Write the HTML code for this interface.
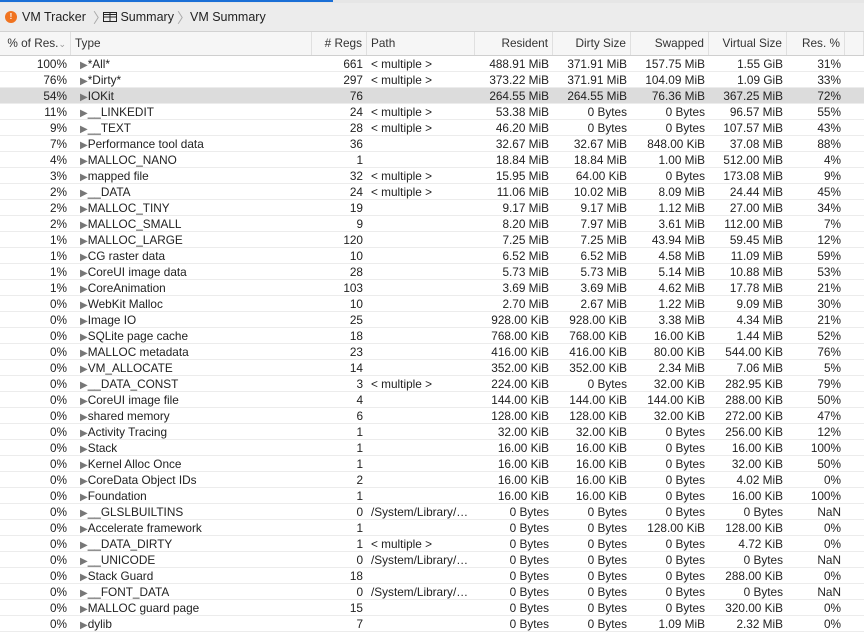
<!DOCTYPE html>
<html><head><meta charset="utf-8"><style>
*{margin:0;padding:0;box-sizing:border-box}
body{width:864px;height:640px;background:#fff;font-family:"Liberation Sans",Arial,sans-serif;font-size:11.8px;color:#222;position:relative;overflow:hidden}
.top{position:absolute;left:0;top:0;width:864px;height:3px;background:#e6e6e6}
.top i{position:absolute;left:0;top:0;width:333px;height:2px;background:#1a6fd6}
.crumb{position:absolute;left:0;top:3px;width:864px;height:29px;background:#ececec;border-bottom:1px solid #d2d2d2;font-size:12.5px;color:#222}
.crumb span{position:absolute;top:7px}
.dot{position:absolute;left:5px;top:8px;width:12px;height:12px;border-radius:50%;background:#f0731f;color:#fff;font-size:8px;line-height:12px;text-align:center;font-weight:bold}
.sep{color:#aaa;font-size:14px;top:5px!important}
#t{position:absolute;left:0;top:32px;width:864px}
.h{display:flex;height:24px;line-height:23px;background:#f6f6f6;border-bottom:1px solid #cfcfcf;color:#333}
.h>div{border-right:1px solid #e0e0e0}
.row{display:flex;height:16px;line-height:16px;border-bottom:1px solid #ececec}
.row>div,.h>div{padding:0 4px;white-space:nowrap;overflow:hidden;flex:none}
.row>div:nth-child(1),.h>div:nth-child(1){width:71px}
.row>div:nth-child(2),.h>div:nth-child(2){width:241px}
.row>div:nth-child(3),.h>div:nth-child(3){width:55px}
.row>div:nth-child(4),.h>div:nth-child(4){width:108px}
.row>div:nth-child(5),.h>div:nth-child(5),.row>div:nth-child(6),.h>div:nth-child(6),.row>div:nth-child(7),.h>div:nth-child(7),.row>div:nth-child(8),.h>div:nth-child(8){width:78px}
.row>div:nth-child(9),.h>div:nth-child(9){width:58px}
.row>div:nth-child(10),.h>div:nth-child(10){width:19px}
.r{text-align:right}
.row>.t{padding-left:9px}
.tri{color:#777;font-size:10px;line-height:1;display:inline-block}
.row.sel{background:#dcdcdc}
</style></head><body>
<div class="top"><i></i></div>
<div class="crumb"><div class="dot">!</div><span style="left:22px">VM Tracker</span><span class="sep" style="left:93px">〉</span>
<span style="left:103px"><svg width="14" height="10" viewBox="0 0 14 10" style="vertical-align:-1px"><rect x="0.5" y="0.5" width="13" height="9" fill="none" stroke="#222"/><line x1="0" y1="5" x2="14" y2="5" stroke="#222"/><line x1="7" y1="0" x2="7" y2="10" stroke="#222"/><line x1="0" y1="2.5" x2="14" y2="2.5" stroke="#222"/></svg> Summary</span><span class="sep" style="left:177px">〉</span><span style="left:190px">VM Summary</span></div>
<div id="t">
<div class="h"><div class="r">% of Res.<span style="color:#999;font-size:9px">⌄</span></div><div>Type</div><div class="r"># Regs</div><div>Path</div><div class="r">Resident</div><div class="r">Dirty Size</div><div class="r">Swapped</div><div class="r">Virtual Size</div><div class="r">Res. %</div><div></div></div>
<div class="row"><div class="r">100%</div><div class="t"><span class="tri">▶</span>*All*</div><div class="r">661</div><div>&lt; multiple &gt;</div><div class="r">488.91 MiB</div><div class="r">371.91 MiB</div><div class="r">157.75 MiB</div><div class="r">1.55 GiB</div><div class="r">31%</div><div></div></div>
<div class="row"><div class="r">76%</div><div class="t"><span class="tri">▶</span>*Dirty*</div><div class="r">297</div><div>&lt; multiple &gt;</div><div class="r">373.22 MiB</div><div class="r">371.91 MiB</div><div class="r">104.09 MiB</div><div class="r">1.09 GiB</div><div class="r">33%</div><div></div></div>
<div class="row sel"><div class="r">54%</div><div class="t"><span class="tri">▶</span>IOKit</div><div class="r">76</div><div></div><div class="r">264.55 MiB</div><div class="r">264.55 MiB</div><div class="r">76.36 MiB</div><div class="r">367.25 MiB</div><div class="r">72%</div><div></div></div>
<div class="row"><div class="r">11%</div><div class="t"><span class="tri">▶</span>__LINKEDIT</div><div class="r">24</div><div>&lt; multiple &gt;</div><div class="r">53.38 MiB</div><div class="r">0 Bytes</div><div class="r">0 Bytes</div><div class="r">96.57 MiB</div><div class="r">55%</div><div></div></div>
<div class="row"><div class="r">9%</div><div class="t"><span class="tri">▶</span>__TEXT</div><div class="r">28</div><div>&lt; multiple &gt;</div><div class="r">46.20 MiB</div><div class="r">0 Bytes</div><div class="r">0 Bytes</div><div class="r">107.57 MiB</div><div class="r">43%</div><div></div></div>
<div class="row"><div class="r">7%</div><div class="t"><span class="tri">▶</span>Performance tool data</div><div class="r">36</div><div></div><div class="r">32.67 MiB</div><div class="r">32.67 MiB</div><div class="r">848.00 KiB</div><div class="r">37.08 MiB</div><div class="r">88%</div><div></div></div>
<div class="row"><div class="r">4%</div><div class="t"><span class="tri">▶</span>MALLOC_NANO</div><div class="r">1</div><div></div><div class="r">18.84 MiB</div><div class="r">18.84 MiB</div><div class="r">1.00 MiB</div><div class="r">512.00 MiB</div><div class="r">4%</div><div></div></div>
<div class="row"><div class="r">3%</div><div class="t"><span class="tri">▶</span>mapped file</div><div class="r">32</div><div>&lt; multiple &gt;</div><div class="r">15.95 MiB</div><div class="r">64.00 KiB</div><div class="r">0 Bytes</div><div class="r">173.08 MiB</div><div class="r">9%</div><div></div></div>
<div class="row"><div class="r">2%</div><div class="t"><span class="tri">▶</span>__DATA</div><div class="r">24</div><div>&lt; multiple &gt;</div><div class="r">11.06 MiB</div><div class="r">10.02 MiB</div><div class="r">8.09 MiB</div><div class="r">24.44 MiB</div><div class="r">45%</div><div></div></div>
<div class="row"><div class="r">2%</div><div class="t"><span class="tri">▶</span>MALLOC_TINY</div><div class="r">19</div><div></div><div class="r">9.17 MiB</div><div class="r">9.17 MiB</div><div class="r">1.12 MiB</div><div class="r">27.00 MiB</div><div class="r">34%</div><div></div></div>
<div class="row"><div class="r">2%</div><div class="t"><span class="tri">▶</span>MALLOC_SMALL</div><div class="r">9</div><div></div><div class="r">8.20 MiB</div><div class="r">7.97 MiB</div><div class="r">3.61 MiB</div><div class="r">112.00 MiB</div><div class="r">7%</div><div></div></div>
<div class="row"><div class="r">1%</div><div class="t"><span class="tri">▶</span>MALLOC_LARGE</div><div class="r">120</div><div></div><div class="r">7.25 MiB</div><div class="r">7.25 MiB</div><div class="r">43.94 MiB</div><div class="r">59.45 MiB</div><div class="r">12%</div><div></div></div>
<div class="row"><div class="r">1%</div><div class="t"><span class="tri">▶</span>CG raster data</div><div class="r">10</div><div></div><div class="r">6.52 MiB</div><div class="r">6.52 MiB</div><div class="r">4.58 MiB</div><div class="r">11.09 MiB</div><div class="r">59%</div><div></div></div>
<div class="row"><div class="r">1%</div><div class="t"><span class="tri">▶</span>CoreUI image data</div><div class="r">28</div><div></div><div class="r">5.73 MiB</div><div class="r">5.73 MiB</div><div class="r">5.14 MiB</div><div class="r">10.88 MiB</div><div class="r">53%</div><div></div></div>
<div class="row"><div class="r">1%</div><div class="t"><span class="tri">▶</span>CoreAnimation</div><div class="r">103</div><div></div><div class="r">3.69 MiB</div><div class="r">3.69 MiB</div><div class="r">4.62 MiB</div><div class="r">17.78 MiB</div><div class="r">21%</div><div></div></div>
<div class="row"><div class="r">0%</div><div class="t"><span class="tri">▶</span>WebKit Malloc</div><div class="r">10</div><div></div><div class="r">2.70 MiB</div><div class="r">2.67 MiB</div><div class="r">1.22 MiB</div><div class="r">9.09 MiB</div><div class="r">30%</div><div></div></div>
<div class="row"><div class="r">0%</div><div class="t"><span class="tri">▶</span>Image IO</div><div class="r">25</div><div></div><div class="r">928.00 KiB</div><div class="r">928.00 KiB</div><div class="r">3.38 MiB</div><div class="r">4.34 MiB</div><div class="r">21%</div><div></div></div>
<div class="row"><div class="r">0%</div><div class="t"><span class="tri">▶</span>SQLite page cache</div><div class="r">18</div><div></div><div class="r">768.00 KiB</div><div class="r">768.00 KiB</div><div class="r">16.00 KiB</div><div class="r">1.44 MiB</div><div class="r">52%</div><div></div></div>
<div class="row"><div class="r">0%</div><div class="t"><span class="tri">▶</span>MALLOC metadata</div><div class="r">23</div><div></div><div class="r">416.00 KiB</div><div class="r">416.00 KiB</div><div class="r">80.00 KiB</div><div class="r">544.00 KiB</div><div class="r">76%</div><div></div></div>
<div class="row"><div class="r">0%</div><div class="t"><span class="tri">▶</span>VM_ALLOCATE</div><div class="r">14</div><div></div><div class="r">352.00 KiB</div><div class="r">352.00 KiB</div><div class="r">2.34 MiB</div><div class="r">7.06 MiB</div><div class="r">5%</div><div></div></div>
<div class="row"><div class="r">0%</div><div class="t"><span class="tri">▶</span>__DATA_CONST</div><div class="r">3</div><div>&lt; multiple &gt;</div><div class="r">224.00 KiB</div><div class="r">0 Bytes</div><div class="r">32.00 KiB</div><div class="r">282.95 KiB</div><div class="r">79%</div><div></div></div>
<div class="row"><div class="r">0%</div><div class="t"><span class="tri">▶</span>CoreUI image file</div><div class="r">4</div><div></div><div class="r">144.00 KiB</div><div class="r">144.00 KiB</div><div class="r">144.00 KiB</div><div class="r">288.00 KiB</div><div class="r">50%</div><div></div></div>
<div class="row"><div class="r">0%</div><div class="t"><span class="tri">▶</span>shared memory</div><div class="r">6</div><div></div><div class="r">128.00 KiB</div><div class="r">128.00 KiB</div><div class="r">32.00 KiB</div><div class="r">272.00 KiB</div><div class="r">47%</div><div></div></div>
<div class="row"><div class="r">0%</div><div class="t"><span class="tri">▶</span>Activity Tracing</div><div class="r">1</div><div></div><div class="r">32.00 KiB</div><div class="r">32.00 KiB</div><div class="r">0 Bytes</div><div class="r">256.00 KiB</div><div class="r">12%</div><div></div></div>
<div class="row"><div class="r">0%</div><div class="t"><span class="tri">▶</span>Stack</div><div class="r">1</div><div></div><div class="r">16.00 KiB</div><div class="r">16.00 KiB</div><div class="r">0 Bytes</div><div class="r">16.00 KiB</div><div class="r">100%</div><div></div></div>
<div class="row"><div class="r">0%</div><div class="t"><span class="tri">▶</span>Kernel Alloc Once</div><div class="r">1</div><div></div><div class="r">16.00 KiB</div><div class="r">16.00 KiB</div><div class="r">0 Bytes</div><div class="r">32.00 KiB</div><div class="r">50%</div><div></div></div>
<div class="row"><div class="r">0%</div><div class="t"><span class="tri">▶</span>CoreData Object IDs</div><div class="r">2</div><div></div><div class="r">16.00 KiB</div><div class="r">16.00 KiB</div><div class="r">0 Bytes</div><div class="r">4.02 MiB</div><div class="r">0%</div><div></div></div>
<div class="row"><div class="r">0%</div><div class="t"><span class="tri">▶</span>Foundation</div><div class="r">1</div><div></div><div class="r">16.00 KiB</div><div class="r">16.00 KiB</div><div class="r">0 Bytes</div><div class="r">16.00 KiB</div><div class="r">100%</div><div></div></div>
<div class="row"><div class="r">0%</div><div class="t"><span class="tri">▶</span>__GLSLBUILTINS</div><div class="r">0</div><div>/System/Library/…</div><div class="r">0 Bytes</div><div class="r">0 Bytes</div><div class="r">0 Bytes</div><div class="r">0 Bytes</div><div class="r">NaN</div><div></div></div>
<div class="row"><div class="r">0%</div><div class="t"><span class="tri">▶</span>Accelerate framework</div><div class="r">1</div><div></div><div class="r">0 Bytes</div><div class="r">0 Bytes</div><div class="r">128.00 KiB</div><div class="r">128.00 KiB</div><div class="r">0%</div><div></div></div>
<div class="row"><div class="r">0%</div><div class="t"><span class="tri">▶</span>__DATA_DIRTY</div><div class="r">1</div><div>&lt; multiple &gt;</div><div class="r">0 Bytes</div><div class="r">0 Bytes</div><div class="r">0 Bytes</div><div class="r">4.72 KiB</div><div class="r">0%</div><div></div></div>
<div class="row"><div class="r">0%</div><div class="t"><span class="tri">▶</span>__UNICODE</div><div class="r">0</div><div>/System/Library/…</div><div class="r">0 Bytes</div><div class="r">0 Bytes</div><div class="r">0 Bytes</div><div class="r">0 Bytes</div><div class="r">NaN</div><div></div></div>
<div class="row"><div class="r">0%</div><div class="t"><span class="tri">▶</span>Stack Guard</div><div class="r">18</div><div></div><div class="r">0 Bytes</div><div class="r">0 Bytes</div><div class="r">0 Bytes</div><div class="r">288.00 KiB</div><div class="r">0%</div><div></div></div>
<div class="row"><div class="r">0%</div><div class="t"><span class="tri">▶</span>__FONT_DATA</div><div class="r">0</div><div>/System/Library/…</div><div class="r">0 Bytes</div><div class="r">0 Bytes</div><div class="r">0 Bytes</div><div class="r">0 Bytes</div><div class="r">NaN</div><div></div></div>
<div class="row"><div class="r">0%</div><div class="t"><span class="tri">▶</span>MALLOC guard page</div><div class="r">15</div><div></div><div class="r">0 Bytes</div><div class="r">0 Bytes</div><div class="r">0 Bytes</div><div class="r">320.00 KiB</div><div class="r">0%</div><div></div></div>
<div class="row"><div class="r">0%</div><div class="t"><span class="tri">▶</span>dylib</div><div class="r">7</div><div></div><div class="r">0 Bytes</div><div class="r">0 Bytes</div><div class="r">1.09 MiB</div><div class="r">2.32 MiB</div><div class="r">0%</div><div></div></div>
</div>
</body></html>
